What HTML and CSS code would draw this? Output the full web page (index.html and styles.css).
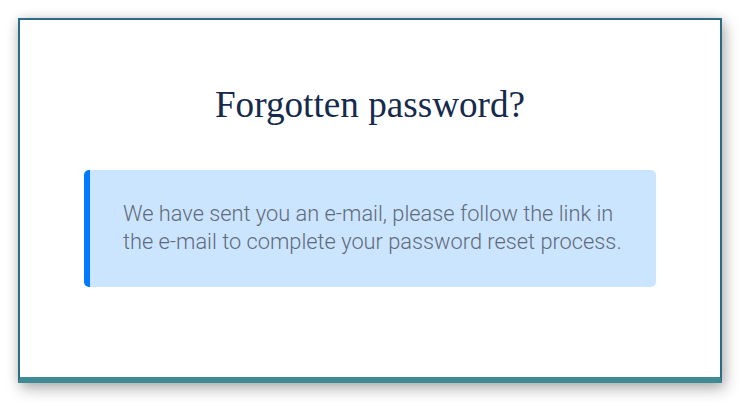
FILE: index.html
```html
<!DOCTYPE html>
<html lang="en">
<head>
<meta charset="utf-8">
<title>Forgotten password?</title>
<link rel="stylesheet" href="styles.css">
</head>
<body>
<main class="card">
  <h1 class="title">Forgotten password?</h1>
  <div class="alert">
    We have sent you an e-mail, please follow the link in<br>the e-mail to complete your password reset process.
  </div>
</main>
</body>
</html>
```
FILE: styles.css
```css
html, body {
  margin: 0;
  padding: 0;
  background: #ffffff;
}
body {
  padding: 18px 28px 0 18px;
  width: 750px;
  height: 411px;
  box-sizing: border-box;
  overflow: hidden;
}
.card {
  box-sizing: border-box;
  width: 704px;
  height: 365px;
  background: #ffffff;
  border: 2px solid #2d6a86;
  border-bottom: 6px solid #3f8b93;
  box-shadow: 3px 6px 14px rgba(0, 0, 0, 0.28), 0 0 10px rgba(0, 0, 0, 0.12);
  padding: 64px 64px 0 64px;
  display: flex;
  flex-direction: column;
}
.title {
  margin: 0;
  text-align: center;
  font-family: "Liberation Serif", "Times New Roman", serif;
  font-weight: 400;
  font-size: 37.2px;
  line-height: 42px;
  color: #152a4c;
}
.alert {
  margin-top: 44px;
  background: #cce5ff;
  border-left: 6px solid #007bff;
  border-radius: 5px;
  padding: 30px 10px 31px 33px;
  font-family: Roboto, "Liberation Sans", sans-serif;
  font-weight: 300;
  font-size: 21.8px;
  line-height: 28px;
  color: #5f6b7a;
  white-space: nowrap;
}
```
